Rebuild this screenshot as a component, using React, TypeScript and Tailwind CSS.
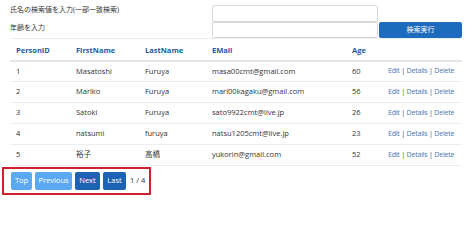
const people = [
  { id: 1, first: 'Masatoshi', last: 'Furuya', email: 'masa00cmt@gmail.com', age: 60 },
  { id: 2, first: 'Mariko', last: 'Furuya', email: 'mari00kagaku@gmail.com', age: 56 },
  { id: 3, first: 'Satoki', last: 'Furuya', email: 'sato9922cmt@live.jp', age: 26 },
  { id: 4, first: 'natsumi', last: 'furuya', email: 'natsu1205cmt@live.jp', age: 23 },
  { id: 5, first: '裕子', last: '高橋', email: 'yukorin@gmail.com', age: 52 },
];

const font = { fontFamily: '"Open Sans", "Noto Sans CJK JP", sans-serif' };

export default function App() {
  return (
    <div className="w-[474px] h-[202px] bg-white text-[7.5px] text-[#333]" style={font}>
      {/* Search form */}
      <div className="flex pt-[5px] pl-[10px]">
        <div className="w-[202px] flex flex-col text-[7px]">
          <div className="h-[12px] flex items-center mt-[-1px]">氏名の検索値を入力(一部一致検索)</div>
          <div className="h-[12px] flex items-center mt-[6px]">年齢を入力</div>
        </div>
        <div className="flex flex-col">
          <input className="w-[166px] h-[17px] border border-[#d6d9dc] rounded-[2px]" />
          <div className="flex">
            <input className="w-[166px] h-[16px] border border-[#d6d9dc] rounded-[2px]" />
            <button className="ml-[1px] w-[83px] h-[16px] bg-[#1c6bbd] text-white rounded-[2px] text-[7px]">
              検索実行
            </button>
          </div>
        </div>
      </div>

      {/* Results */}
      <table className="ml-[10px] w-[452px] border-collapse table-fixed whitespace-nowrap">
        <thead>
          <tr className="h-[22px] border-t border-[#eceeef] border-b-2 border-b-[#e3e5e7] text-[#1f5aa6] font-bold text-left">
            <th className="w-[66px] pl-[6px] pt-[2px] font-bold">PersonID</th>
            <th className="w-[69px] pt-[2px] font-bold">FirstName</th>
            <th className="w-[67px] pt-[2px] font-bold">LastName</th>
            <th className="w-[140px] pt-[2px] font-bold">EMail</th>
            <th className="w-[36px] pt-[2px] font-bold">Age</th>
            <th></th>
          </tr>
        </thead>
        <tbody className="text-[#333]">
          {people.map((p) => (
            <tr key={p.id} className="h-[21px] border-b border-[#eceeef]">
              <td className="pl-[6px]">{p.id}</td>
              <td>{p.first}</td>
              <td className="text-[#333]">{p.last}</td>
              <td>{p.email}</td>
              <td>{p.age}</td>
              <td className="text-[#4a74b4] text-[7px] tracking-[-0.2px]">
                Edit <span className="text-[#2a3f66]">|</span> Details <span className="text-[#2a3f66]">|</span> Delete
              </td>
            </tr>
          ))}
        </tbody>
      </table>

      {/* Pager */}
      <div className="ml-[2px] mt-[1px] w-[149px] h-[28px] border-2 border-[#d0202f] flex items-center pl-[7px] gap-[3px] text-white">
        <button className="h-[18px] w-[21px] bg-[#5aa9f2] rounded-[2px]">Top</button>
        <button className="h-[18px] w-[37px] bg-[#5aa9f2] rounded-[2px]">Previous</button>
        <button className="h-[18px] w-[25px] bg-[#1c63b5] rounded-[2px]">Next</button>
        <button className="h-[18px] w-[23px] bg-[#1c63b5] rounded-[2px]">Last</button>
        <span className="text-[#333] ml-[1px]">1 / 4</span>
      </div>
    </div>
  );
}
